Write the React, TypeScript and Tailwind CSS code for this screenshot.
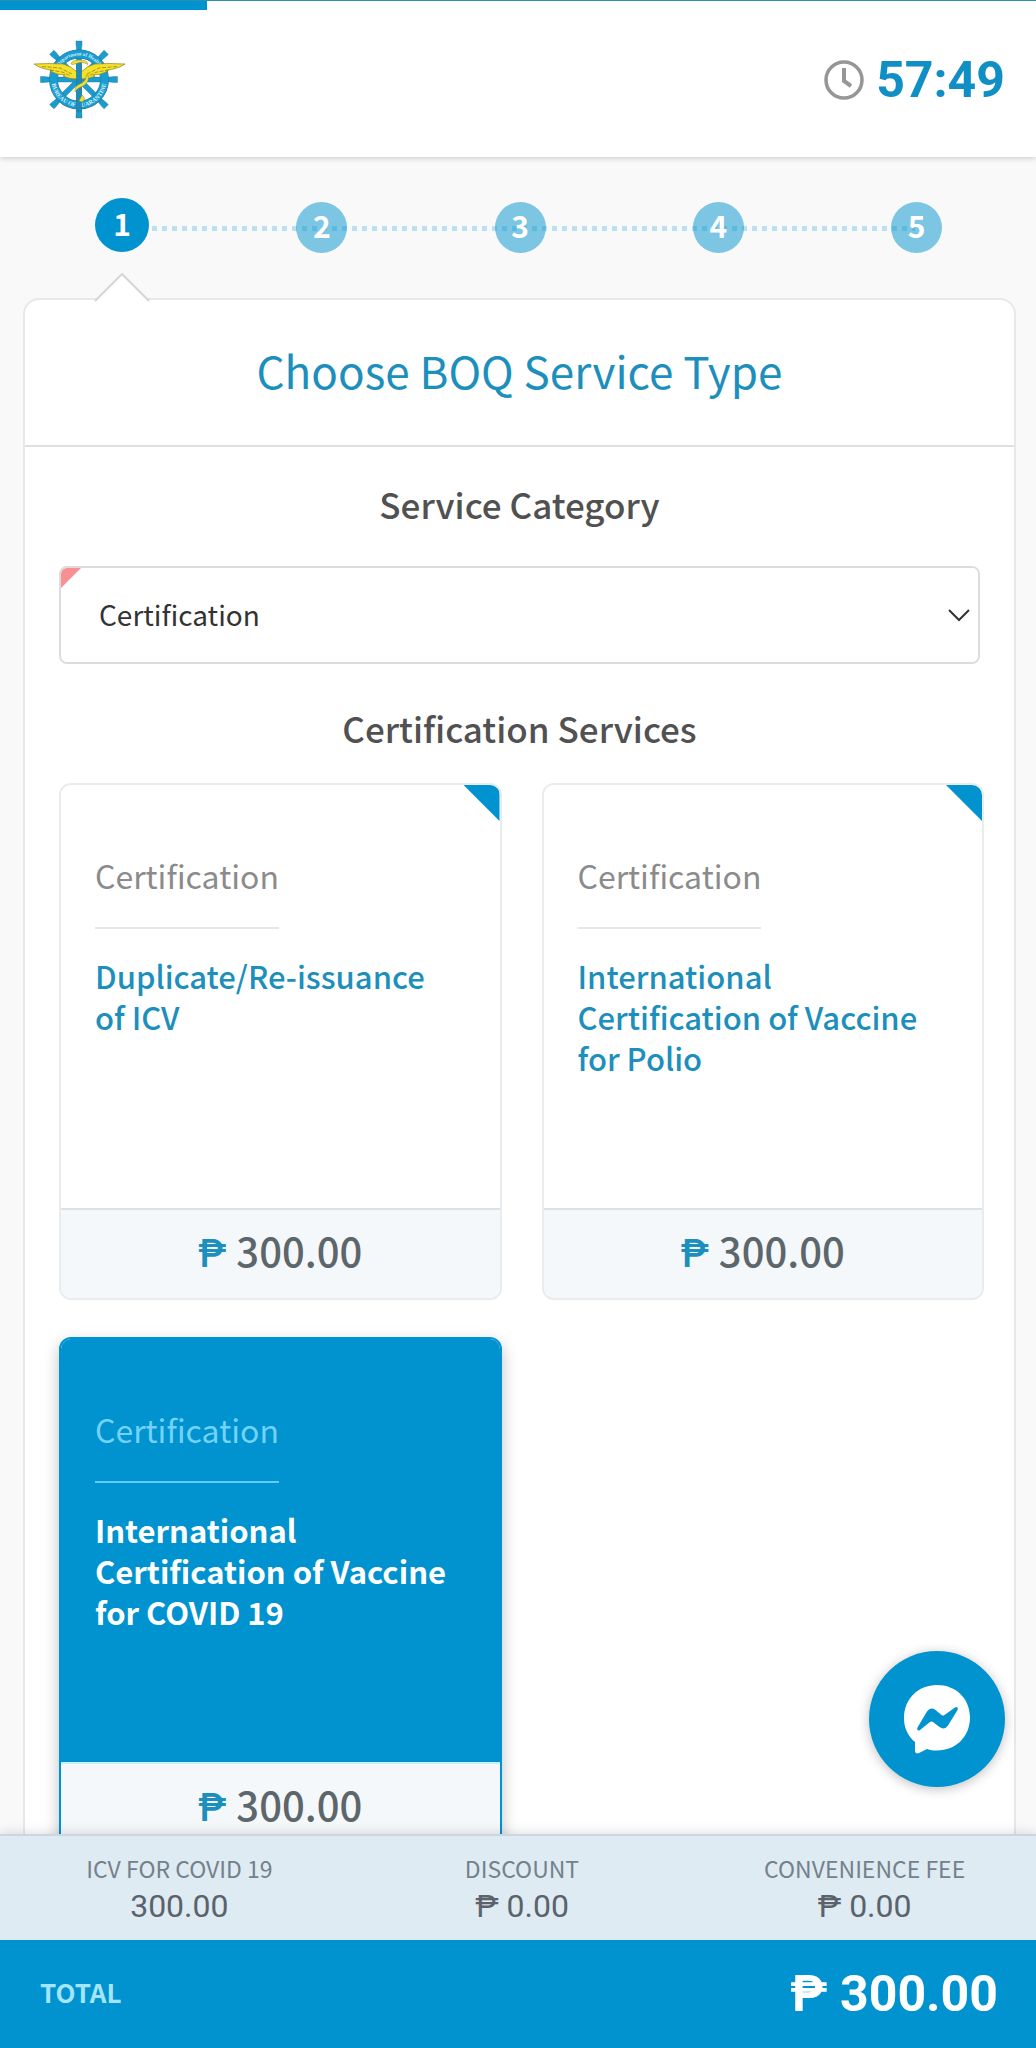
import { useState } from 'react';
import clsx from 'clsx';

interface Service {
  id: number;
  category: string;
  name: string;
  price: string;
}

const services: Service[] = [
  { id: 1, category: 'Certification', name: 'Duplicate/Re-issuance of ICV', price: '300.00' },
  { id: 2, category: 'Certification', name: 'International Certification of Vaccine for Polio', price: '300.00' },
  { id: 3, category: 'Certification', name: 'International Certification of Vaccine for COVID 19', price: '300.00' },
];

const steps = [1, 2, 3, 4, 5];

const Logo = () => (
  <svg viewBox="33 41 93 79" className="h-[79px] w-[93px]" role="img" aria-label="Bureau of Quarantine">
    {/* Wheel handles and spokes */}
    {[0, 45, 90, 135, 180, 225, 270, 315].map(angle => (
      <path
        key={angle}
        transform={`rotate(${angle} 79 80.5)`}
        d="M76.500 80.500V50l-.5-4.500V42h6v3.500l-.5 4.500v30.500z"
        fill="#1a9cd0"
        stroke="#28708f"
        strokeWidth="0.400"
      />
    ))}
    <circle cx="79" cy="80.500" r="25.500" fill="none" stroke="#28708f" strokeWidth="8.800" />
    <circle cx="79" cy="80.500" r="25.500" fill="none" stroke="#1a9cd0" strokeWidth="8" />
    <path id="ring-top" d="M55 80.500a24 24 0 0 1 48 0" fill="none" />
    <path id="ring-bottom" d="M51.500 80.500a27.500 27.500 0 0 0 55 0" fill="none" />
    <text fontSize="5" fill="#d9f3fc" textAnchor="middle" className="font-['Liberation_Serif',serif] font-bold">
      <textPath href="#ring-top" startOffset="50%">Department of Health</textPath>
    </text>
    <text fontSize="6" fill="#d9f3fc" textAnchor="middle" className="font-['Liberation_Serif',serif] font-bold">
      <textPath href="#ring-bottom" startOffset="50%">BUREAU OF QUARANTINE</textPath>
    </text>
    {/* Wings */}
    <path d="M34 65q16-1 29 0 8 2 14 8v7q-8 0-14-3l2-1q-8 0-15-4l3-.5Q41 70 34 65z" fill="#f6e12a" stroke="#8d8427" strokeWidth="0.700" />
    <path d="M125 65q-17-1-30 0-8 2-14 8v7q8 0 14-3l-2-1q8 0 15-4l-3-.5Q118 70 125 65z" fill="#f6e12a" stroke="#8d8427" strokeWidth="0.700" />
    <path d="M42 67.500l18 1.500 12 6M50 71l12 2 9 4M117 67.500L99 69l-12 6M109 71l-12 2-9 4" fill="none" stroke="#9d8e22" strokeWidth="0.900" strokeDasharray="4 1.500" />
    {/* Staff and serpent */}
    <path d="M76.500 63h5v50h-5z" fill="#1a8dbd" stroke="#28708f" strokeWidth="0.500" />
    <path d="M71 65q1-4 8-4 9 0 9 4.500-4-2.500-8-2l-7 2zM86 76q1 6-6 9-6 2-5 8 2-4 8-6 7-4 5-11zM82 96q5 4 0 7l-3-1z" fill="#f0e03c" stroke="#8d8427" strokeWidth="0.500" />
  </svg>
);

const ClockIcon = () => (
  <svg viewBox="0 0 40 40" className="size-10" fill="none" stroke="#969696" aria-hidden="true">
    <circle cx="20" cy="20" r="18" strokeWidth="3.500" />
    <path d="M20 8v13l7 5" strokeWidth="4" />
  </svg>
);

const MessengerIcon = () => (
  <svg viewBox="0 0 68 70" className="h-[70px] w-[68px]" aria-hidden="true">
    <path d="M34 1C15 1 1 15 1 34c0 10 4 18 11 24v9c0 2 2 3 4 2l8-4c3 1 6 1.500 10 1.500 19 0 33-14 33-33S53 1 34 1z" fill="#fff" />
    <path d="M14.500 43.500l9.500-16q3.500-5 8.500-1.500l6 5q1.500 1 3 0l10.500-7.500c2-1.500 3.500.5 2.500 2.500l-9.500 15.500q-3.500 5-8.500 1.500l-6.500-5q-1.500-1-3 0L17 46c-2 1.500-3.500-.5-2.500-2.500z" fill="#0093cf" />
  </svg>
);

const Stepper = ({ current }: { current: number }) => (
  <ol className="flex h-14 items-center justify-between bg-[repeating-linear-gradient(90deg,#b9e1f0_0_5px,transparent_5px_10px)] bg-[length:calc(100%-54px)_5px] bg-[position:27px_27px] bg-no-repeat">
    {steps.map(step => (
      <li
        key={step}
        aria-current={step === current ? 'step' : undefined}
        className={clsx(
          'flex items-center justify-center rounded-full pb-1 text-[30px] leading-none font-bold text-white',
          step === current ? 'mb-1 size-[54px] bg-[#0093cf]' : 'size-[51px] bg-[#0093cf]/50'
        )}
      >
        {step}
      </li>
    ))}
  </ol>
);

interface ServiceCardProps {
  service: Service;
  isSelected: boolean;
  onSelect: (id: number) => void;
}

const ServiceCard = ({ service, isSelected, onSelect }: ServiceCardProps) => (
  <button
    type="button"
    aria-pressed={isSelected}
    onClick={() => onSelect(service.id)}
    className={clsx(
      'relative flex h-[517px] flex-col overflow-hidden rounded-xl border-2 text-left',
      isSelected ? 'border-[#0093cf] shadow-[0_6px_16px_rgba(0,0,0,0.25)]' : 'border-[#e9ebec]'
    )}
  >
    {/* Corner flag */}
    {!isSelected && <span className="absolute top-0 right-0 size-9 bg-[#0093cf] [clip-path:polygon(0_0,100%_0,100%_100%)]" />}

    <span className={clsx('flex w-full flex-1 flex-col items-start pt-16 pr-11 pl-[34px]', isSelected ? 'bg-[#0093cf]' : 'bg-white')}>
      <span
        className={clsx(
          'border-b-2 pb-[26px] text-[32px] leading-[52px]',
          isSelected ? 'border-[#5fcdf6] text-[#73d2f7]' : 'border-[#e6e6e6] text-[#8b8b8b]'
        )}
      >
        {service.category}
      </span>
      <span
        className={clsx(
          'mt-[26px] text-[31px] leading-[41px]',
          isSelected ? 'font-bold text-white' : 'font-medium text-[#1c8fbc]'
        )}
      >
        {service.name}
      </span>
    </span>

    <span
      className={clsx(
        'flex h-[90px] w-full items-baseline justify-center gap-2.5 border-t-2 bg-[#f4f8fb] text-[40px] leading-[80px] font-medium text-[#5c666b]',
        isSelected ? 'border-[#c9effb]' : 'border-[#dbe1e5]'
      )}
    >
      <span className="font-[Roboto,sans-serif] text-[38px] text-[#1c8fbc]">₱</span>
      {service.price}
    </span>
  </button>
);

const SummaryItem = ({ label, value }: { label: string; value: string }) => (
  <div className="flex flex-col items-center">
    <dt className="text-[23px] leading-9 text-[#74808c]">{label}</dt>
    <dd className="font-[Roboto,sans-serif] text-[32px] leading-10 text-[#5b626c]">{value}</dd>
  </div>
);

const App = () => {
  const [selectedId, setSelectedId] = useState(3);
  const [category, setCategory] = useState('Certification');

  return (
    <div className="flex h-screen flex-col bg-[#f9f9f9] font-['Noto_Sans_CJK_SC',sans-serif]">
      <header className="z-10 border-t border-[#2d8fae] bg-white shadow-[0_1px_6px_rgba(0,0,0,0.2)]">
        <div className="h-[9px] w-1/5 bg-[#0093cf]" />
        <div className="flex h-[147px] items-center justify-between pr-[31px] pb-2 pl-[33px]">
          <Logo />
          <div className="flex items-center gap-3">
            <ClockIcon />
            <time className="font-[Roboto,sans-serif] text-[50px] leading-none font-bold text-[#0f8fc4]">57:49</time>
          </div>
        </div>
      </header>

      <main className="min-h-0 flex-1 overflow-y-auto pr-5 pl-[23px] [scrollbar-width:none]">
        <div className="pt-[42px] pr-[74px] pl-[72px]">
          <Stepper current={1} />
        </div>

        <section className="relative mt-[43px] rounded-t-2xl border-2 border-[#e8e8e8] bg-white pb-10">
          {/* Arrow pointing at the active step */}
          <svg viewBox="0 0 56 30" className="absolute -top-[28px] left-[69px] h-[30px] w-14" aria-hidden="true">
            <path d="M1 29L28 2l27 27z" fill="#fff" />
            <path d="M1 29L28 2l27 27" fill="none" stroke="#d6d6d6" strokeWidth="2" />
          </svg>

          <h1 className="border-b-2 border-[#e0e0e0] pt-8 pb-9 text-center text-[44px] leading-[77px] text-[#1c8fbc]">
            Choose BOQ Service Type
          </h1>

          <div className="px-[34px]">
            <label htmlFor="category" className="block pt-[27px] text-center text-[35px] leading-[60px] font-medium text-[#515151]">
              Service Category
            </label>
            <div className="relative mt-8 overflow-hidden rounded-lg border-2 border-[#dcdcdc]">
              <select
                id="category"
                value={category}
                onChange={e => setCategory(e.target.value)}
                className="block h-[94px] w-full appearance-none bg-white px-[38px] pb-0.5 text-[28px] text-[#333]"
              >
                <option>Certification</option>
              </select>
              <span className="absolute top-0 left-0 size-5 bg-[#f78f93] [clip-path:polygon(0_0,100%_0,0_100%)]" />
              <svg viewBox="0 0 24 14" className="pointer-events-none absolute top-10 right-[7px] h-3.5 w-6" aria-hidden="true">
                <path d="M2 2l10 10L22 2" fill="none" stroke="#333" strokeWidth="2" />
              </svg>
            </div>

            <h2 className="mt-[34px] text-center text-[35px] leading-[60px] font-medium text-[#515151]">Certification Services</h2>
            <div className="mt-[25px] -mr-1 grid grid-cols-2 gap-x-10 gap-y-[37px]">
              {services.map(service => (
                <ServiceCard
                  key={service.id}
                  service={service}
                  isSelected={service.id === selectedId}
                  onSelect={setSelectedId}
                />
              ))}
            </div>
          </div>
        </section>
      </main>

      <button
        type="button"
        aria-label="Chat on Messenger"
        className="fixed right-[31px] bottom-[261px] z-10 flex size-[136px] items-center justify-center rounded-full bg-[#0093cf] shadow-[0_2px_12px_rgba(0,0,0,0.25)]"
      >
        <MessengerIcon />
      </button>

      <footer className="z-10 shadow-[0_-2px_10px_rgba(0,0,0,0.12)]">
        <dl className="grid grid-cols-3 border-t-2 border-[#cbd6e4] bg-[#deebf2] pt-3.5 pb-3.5 pl-2">
          <SummaryItem label="ICV FOR COVID 19" value="300.00" />
          <SummaryItem label="DISCOUNT" value="₱ 0.00" />
          <SummaryItem label="CONVENIENCE FEE" value="₱ 0.00" />
        </dl>
        <div className="flex h-[108px] items-center justify-between bg-[#0093cf] pr-[38px] pl-10">
          <span className="pb-1 text-[26px] leading-none font-bold text-[#a5e5fb]">TOTAL</span>
          <span className="font-[Roboto,sans-serif] text-[50px] leading-none font-bold text-white">₱ 300.00</span>
        </div>
      </footer>
    </div>
  );
};

export default App;
